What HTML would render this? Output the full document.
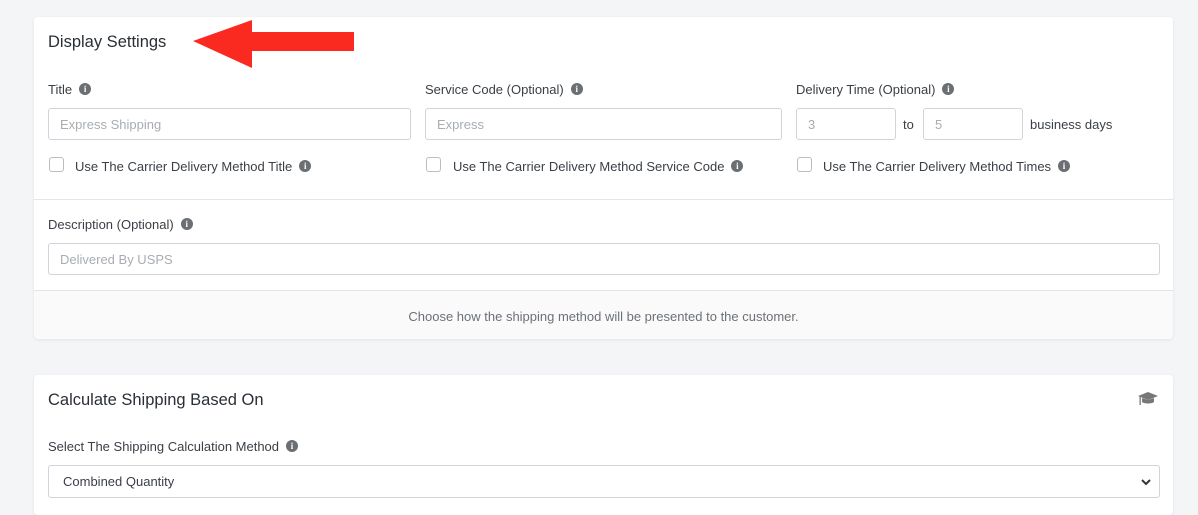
<!DOCTYPE html>
<html><head><style>
body{margin:0;background:#f4f5f7;font-family:"Liberation Sans",sans-serif;color:#3a3f45;width:1198px;height:507px;overflow:hidden;position:relative}
.card{position:absolute;left:34px;width:1139px;background:#fff;border-radius:4px;box-shadow:0 1px 3px rgba(0,0,0,.08)}
.h{position:absolute;left:14px;font-size:16.5px;color:#2a2f35}
.lbl{position:absolute;font-size:13px;color:#3a3f45;line-height:16px}
.i{display:inline-block;width:12px;height:12px;border-radius:50%;background:#6b6f73;color:#fff;font-size:9px;line-height:12px;text-align:center;font-weight:bold;font-family:"Liberation Serif",serif;vertical-align:top;margin-top:1px;margin-left:7px}
.in{position:absolute;height:32px;border:1px solid #ced4da;border-radius:3px;box-sizing:border-box;font-size:13px;color:#a8adb2;padding-left:11px;line-height:31px}
.cb{position:absolute;width:15px;height:15px;border:1px solid #b9bec3;border-radius:3px;box-sizing:border-box}
</style></head><body>
<div class="card" style="top:17px;height:322px">
 <div class="h" style="top:16px">Display Settings</div>
 <div class="lbl" style="left:14px;top:65px">Title<span class="i">i</span></div>
 <div class="lbl" style="left:391px;top:65px">Service Code (Optional)<span class="i">i</span></div>
 <div class="lbl" style="left:762px;top:65px">Delivery Time (Optional)<span class="i">i</span></div>
 <div class="in" style="left:14px;top:91px;width:363px">Express Shipping</div>
 <div class="in" style="left:391px;top:91px;width:357px">Express</div>
 <div class="in" style="left:762px;top:91px;width:100px">3</div>
 <div class="lbl" style="left:869px;top:100px">to</div>
 <div class="in" style="left:889px;top:91px;width:100px">5</div>
 <div class="lbl" style="left:996px;top:100px">business days</div>
 <div class="cb" style="left:15px;top:140px"></div><div class="lbl" style="left:41px;top:142px">Use The Carrier Delivery Method Title<span class="i">i</span></div>
 <div class="cb" style="left:392px;top:140px"></div><div class="lbl" style="left:419px;top:142px">Use The Carrier Delivery Method Service Code<span class="i">i</span></div>
 <div class="cb" style="left:763px;top:140px"></div><div class="lbl" style="left:789px;top:142px">Use The Carrier Delivery Method Times<span class="i">i</span></div>
 <div style="position:absolute;left:0;right:0;top:182px;border-top:1px solid #e3e5e8"></div>
 <div class="lbl" style="left:14px;top:200px">Description (Optional)<span class="i">i</span></div>
 <div class="in" style="left:14px;top:226px;width:1112px">Delivered By USPS</div>
 <div style="position:absolute;left:0;right:0;top:273px;bottom:0;border-top:1px solid #e3e5e8;background:#fafafa;border-radius:0 0 4px 4px;text-align:center;font-size:13px;color:#6c7177;line-height:52px">Choose how the shipping method will be presented to the customer.</div>
</div>
<svg style="position:absolute;left:190px;top:18px" width="168" height="52"><polygon points="3,23 62,2 62,14 164,14 164,33 62,33 62,50" fill="#fb2a20"/></svg>
<div class="card" style="top:375px;height:140px">
 <div class="h" style="top:16px">Calculate Shipping Based On</div>
 <svg style="position:absolute;left:1103px;top:16px" width="22" height="17" viewBox="0 0 22 17"><polygon points="11,1 21,5 11,9 1,5" fill="#777"/><path d="M5,7v4c2,2 10,2 12,0v-4l-6,2z" fill="#777"/><rect x="2.5" y="5" width="1.3" height="9" fill="#777"/></svg>
 <div class="lbl" style="left:14px;top:64px">Select The Shipping Calculation Method<span class="i">i</span></div>
 <div class="in" style="left:14px;top:90px;width:1112px;height:33px;color:#3a3f45;padding-left:14px">Combined Quantity
  <svg style="position:absolute;right:8px;top:12px" width="10" height="8"><path d="M1,2l4,4l4,-4" stroke="#333" stroke-width="2" fill="none"/></svg></div>
</div>
</body></html>
